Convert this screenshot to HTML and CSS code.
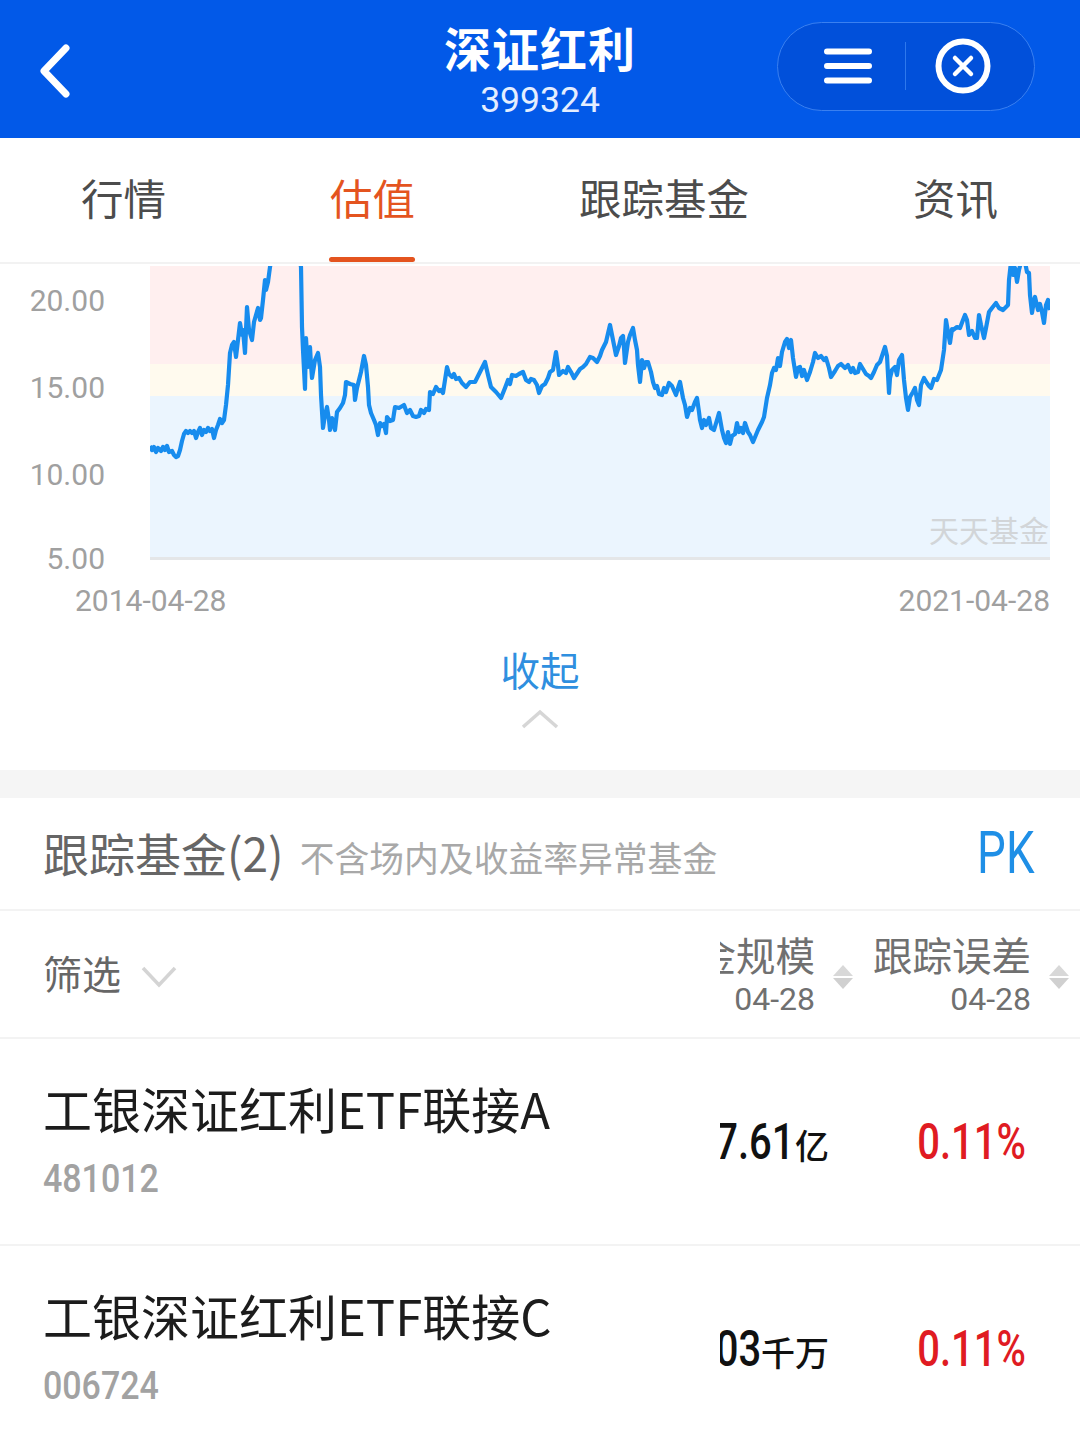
FILE: index.html
```html
<!DOCTYPE html>
<html lang="zh">
<head>
<meta charset="utf-8">
<title>深证红利</title>
<link rel="stylesheet" href="styles.css">
</head>
<body>
<header class="topbar">
  <svg class="back" viewBox="0 0 32 54" width="32" height="54"><path d="M27 4 5 27l22 23" fill="none" stroke="#fff" stroke-width="7" stroke-linecap="round" stroke-linejoin="round"/></svg>
  <div class="title">
    <div class="title-main">深证红利</div>
    <div class="title-code">399324</div>
  </div>
  <div class="capsule">
    <svg class="cap-menu" viewBox="0 0 48 36" width="48" height="36"><path d="M3 3.5h42M3 18h42M3 32.500h42" stroke="#fff" stroke-width="6" stroke-linecap="round"/></svg>
    <span class="cap-sep"></span>
    <svg class="cap-close" viewBox="0 0 56 56" width="56" height="56"><circle cx="28" cy="28" r="24.500" fill="none" stroke="#fff" stroke-width="6"/><path d="M20 20l16 16M36 20 20 36" stroke="#fff" stroke-width="4.500" stroke-linecap="round"/></svg>
  </div>
</header>
<nav class="tabs">
  <span class="tab">行情</span>
  <span class="tab tab-active">估值</span>
  <span class="tab">跟踪基金</span>
  <span class="tab">资讯</span>
</nav>
<section class="chart-card">
  <div class="chart-wrap">
    <div class="y-axis"><span>20.00</span><span>15.00</span><span>10.00</span><span>5.00</span></div>
    <div class="plot">
      <div class="band band-red"></div>
      <div class="band band-yellow"></div>
      <div class="band band-blue"></div>
      <div class="axis-line"></div>
      <svg class="line" viewBox="150 266 900 294" preserveAspectRatio="none"><polyline fill="none" stroke="#178cee" stroke-width="4.200" stroke-linejoin="round" points="150,446 152,450 154,447 156,452 158,448 161,451 163,447 165,450 167,446 169,452 172,451 174,455 176,457 178,456 180,450 182,441 184,434 186,431 188,433 190,431 192,433 194,431 196,438 198,432 200,428 202,435 204,430 206,432 208,428 210,431 212,429 214,438 216,430 218,425 220,419 222,423 224,420 226,405 228,385 230,353 232,345 234,342 236,357 238,340 240,323 242,335 243,330 245,353 247,307 249,330 252,340 254,322 256,315 258,308 260,320 261,318 263,300 265,280 266,290 268,282 270,267 271,262 300,262 301,267 302,327 303,350 305,389 306,338 307,355 308,367 310,347 311,365 312,378 315,360 318,353 320,367 321,395 323,428 325,415 327,407 329,420 330,430 332,418 333,422 335,430 337,412 340,408 343,403 345,395 346,382 350,384 354,385 355,400 357,388 359,380 361,372 364,356 366,365 368,387 369,405 371,413 374,420 376,425 378,435 380,423 382,426 384,424 386,433 387,417 390,421 393,420 395,407 399,408 404,405 407,413 410,410 413,416 416,417 419,416 421,410 424,413 426,409 429,410 430,392 433,394 436,387 439,391 441,390 443,393 445,380 447,367 449,374 452,377 454,374 456,379 459,378 462,383 466,387 470,382 475,382 480,372 485,362 488,375 491,387 496,392 501,398 505,388 508,380 510,384 512,375 516,376 519,374 523,372 526,380 529,382 531,379 534,380 537,385 539,393 542,386 545,384 548,378 550,372 553,370 556,352 558,366 559,375 563,371 566,373 568,367 571,372 574,378 578,372 580,369 583,367 586,364 590,357 593,358 597,362 600,356 602,350 606,342 610,325 613,340 616,355 619,346 621,338 623,336 624,348 625,363 628,342 630,335 633,328 635,340 637,350 638,365 640,382 642,360 644,368 646,362 648,362 651,372 653,382 655,388 657,386 659,394 662,395 664,388 666,392 669,383 672,386 676,395 678,388 680,382 683,398 685,405 687,417 690,408 692,410 695,402 697,398 699,412 700,420 702,428 704,420 706,425 709,418 711,428 714,430 717,420 719,413 722,430 724,438 726,443 728,432 730,444 732,436 735,434 737,423 739,432 741,428 743,433 745,423 748,432 750,435 753,442 758,430 762,422 764,417 767,398 770,385 772,373 774,368 776,370 778,358 780,366 782,352 785,342 787,339 789,348 791,340 793,358 796,377 798,368 800,367 802,376 804,370 807,380 810,372 813,362 815,353 818,358 821,356 824,360 826,358 829,368 831,377 835,371 838,366 841,364 845,368 848,365 851,372 853,368 855,373 858,372 860,364 863,369 866,374 869,376 871,378 874,372 877,365 880,362 883,353 885,347 887,356 889,393 890,378 892,370 895,367 897,375 899,360 902,355 904,380 906,398 908,410 910,397 913,392 915,388 917,400 919,405 921,385 924,378 927,383 929,386 931,388 934,379 937,380 941,370 944,350 946,320 948,332 950,343 952,329 953,330 957,327 960,328 963,320 965,315 967,320 969,335 972,331 975,338 977,338 979,315 981,325 984,338 986,328 989,312 992,308 996,303 999,308 1003,310 1006,307 1008,305 1009,280 1011,262 1013,275 1015,268 1017,282 1019,270 1021,262 1025,262 1027,272 1029,273 1030,295 1032,313 1034,300 1035,297 1038,310 1040,304 1042,312 1044,323 1046,305 1048,300 1050,310"/></svg>
      <div class="watermark">天天基金</div>
    </div>
  </div>
  <div class="x-axis"><span>2014-04-28</span><span>2021-04-28</span></div>
  <div class="collapse">
    <span class="collapse-text">收起</span>
    <svg class="collapse-icon" viewBox="0 0 38 20" width="38" height="20"><path d="M2 18 19 3l17 15" fill="none" stroke="#d6d6d6" stroke-width="3.500"/></svg>
  </div>
</section>
<section class="funds">
  <div class="funds-head">
    <span class="funds-title">跟踪基金(2)</span>
    <span class="funds-note">不含场内及收益率异常基金</span>
    <span class="pk">PK</span>
  </div>
  <div class="filter-row">
    <span class="filter">筛选</span>
    <svg class="filter-icon" viewBox="0 0 36 24" width="36" height="24"><path d="M2 4l16 17L34 4" fill="none" stroke="#d4d4d4" stroke-width="3.500"/></svg>
    <div class="cols">
      <div class="col-head">
        <div class="col-text"><div class="col-name">基金规模</div><div class="col-date">04-28</div></div>
        <span class="sort"><i class="up"></i><i class="down"></i></span>
      </div>
      <div class="col-head">
        <div class="col-text"><div class="col-name">跟踪误差</div><div class="col-date">04-28</div></div>
        <span class="sort"><i class="up"></i><i class="down"></i></span>
      </div>
    </div>
  </div>
  <div class="row">
    <div class="fund"><div class="fund-name">工银深证红利ETF联接A</div><div class="fund-code">481012</div></div>
    <div class="cols vals">
      <div class="val val-a"><b>17.61</b><small>亿</small></div>
      <div class="val val-b">0.11%</div>
    </div>
  </div>
  <div class="row">
    <div class="fund"><div class="fund-name">工银深证红利ETF联接C</div><div class="fund-code">006724</div></div>
    <div class="cols vals">
      <div class="val val-a"><b>303</b><small>千万</small></div>
      <div class="val val-b">0.11%</div>
    </div>
  </div>
</section>
</body>
</html>
```
FILE: styles.css
```css
* { box-sizing: border-box; }
html, body { margin: 0; padding: 0; }
body {
  width: 1080px;
  height: 1433px;
  overflow: hidden;
  background: #fff;
  font-family: "Noto Sans CJK SC", "Noto Sans", sans-serif;
}
.topbar {
  height: 138px;
  background: #0259e8;
  display: flex;
  align-items: center;
  justify-content: space-between;
  padding: 0 45px 0 39px;
  color: #fff;
  position: relative;
}
.back { margin-top: 4px; }
.title {
  position: absolute;
  left: 0;
  right: 0;
  top: 17px;
  text-align: center;
}
.title-main { font-size: 47px; font-weight: 700; line-height: 60px; letter-spacing: 1px; }
.title-code { font-family: Roboto, sans-serif; font-size: 35.5px; line-height: 40px; margin-top: 3px; color: #e4eeff; }
.capsule {
  position: relative;
  width: 258px;
  height: 89px;
  margin-top: -6px;
  border: 1px solid #3a80f0;
  border-radius: 45px;
  background: #0150da;
  display: flex;
  align-items: center;
}
.cap-menu { margin-left: 46px; margin-top: -1px; }
.cap-sep { width: 1px; height: 48px; background: #2e78ec; margin-left: 33px; }
.cap-close { margin-left: 29px; margin-top: -1px; }
.tabs {
  height: 126px;
  border-bottom: 2px solid #f2f2f2;
  display: flex;
  font-size: 42.5px;
  color: #4c4c4c;
  position: relative;
}
.tab { position: absolute; top: 31px; line-height: 56px; }
.tab:nth-child(1) { left: 81px; }
.tab:nth-child(2) { left: 330px; }
.tab:nth-child(3) { left: 579px; }
.tab:nth-child(4) { left: 913px; }
.tab-active { color: #e4541f; }
.tab-active::after {
  content: "";
  position: absolute;
  left: -1px;
  right: 0;
  top: 88px;
  height: 5px;
  border-radius: 3px;
  background: #e4541f;
}
.chart-card { height: 506px; padding-top: 2px; }
.chart-wrap { display: flex; height: 294px; }
.y-axis {
  width: 150px;
  position: relative;
  font-family: Roboto, sans-serif;
  font-size: 30px;
  color: #a0a0a0;
}
.y-axis span { position: absolute; right: 45px; line-height: 34px; }
.y-axis span:nth-child(1) { top: 18px; }
.y-axis span:nth-child(2) { top: 105px; }
.y-axis span:nth-child(3) { top: 192px; }
.y-axis span:nth-child(4) { top: 276px; }
.plot {
  width: 900px;
  height: 294px;
  position: relative;
  display: flex;
  flex-direction: column;
  overflow: hidden;
}
.band-red { height: 98px; background: #ffefef; }
.band-yellow { height: 32px; background: #fffaee; }
.band-blue { height: 161px; background: #ebf5fe; }
.axis-line { height: 3px; background: #e4e6e8; }
.line { position: absolute; inset: 0; width: 900px; height: 294px; }
.watermark {
  position: absolute;
  right: 1px;
  bottom: 11px;
  font-size: 30px;
  line-height: 40px;
  color: #d2d5d8;
}
.x-axis {
  display: flex;
  justify-content: space-between;
  padding: 24px 30px 0 75px;
  font-family: Roboto, sans-serif;
  font-size: 30px;
  line-height: 34px;
  color: #a0a0a0;
}
.collapse { display: flex; flex-direction: column; align-items: center; margin-top: 25px; }
.collapse-text { font-size: 39.5px; line-height: 52px; color: #2f8fdf; }
.collapse-icon { margin-top: 14px; }
.funds { border-top: 28px solid #f5f5f5; }
.funds-head {
  height: 113px;
  padding: 0 46px 0 43px;
  border-bottom: 2px solid #f3f3f3;
  display: flex;
  align-items: center;
}
.funds-title { font-size: 46px; color: #666; line-height: 60px; margin-top: -4px; }
.funds-note { font-size: 34.8px; color: #a8a8a8; margin-left: 16px; line-height: 60px; padding-top: 6px; white-space: nowrap; }
.pk {
  margin-left: auto;
  font-family: Roboto, sans-serif;
  font-size: 60px;
  line-height: 70px;
  color: #1f8fe6;
  transform: scaleX(0.76);
  transform-origin: right center;
  margin-top: -2px;
}
.filter-row {
  height: 128px;
  padding-left: 43px;
  border-bottom: 2px solid #f3f3f3;
  display: flex;
  align-items: center;
  position: relative;
}
.filter { font-size: 39px; color: #666; line-height: 52px; margin-top: -4px; }
.filter-icon { margin-left: 20px; margin-top: 3px; }
.cols {
  position: absolute;
  left: 720px;
  right: 0;
  top: 0;
  bottom: 0;
  overflow: hidden;
  display: flex;
  justify-content: flex-end;
}
.col-head {
  flex: none;
  display: flex;
  align-items: center;
  width: 216px;
  justify-content: flex-end;
}
.col-text { text-align: right; color: #707070; padding-bottom: 3px; }
.col-name { font-size: 39.5px; line-height: 50px; white-space: nowrap; }
.col-date { font-family: Roboto, sans-serif; font-size: 32px; line-height: 36px; margin-top: 2px; }
.sort { display: flex; flex-direction: column; gap: 2px; width: 20px; margin: 6px 11px 0 18px; flex: none; }
.sort i { display: block; width: 0; height: 0; border-left: 10px solid transparent; border-right: 10px solid transparent; }
.sort .up { border-bottom: 11px solid #d8d8d8; }
.sort .down { border-top: 11px solid #d0d0d0; }
.row { height: 207px; border-bottom: 2px solid #f3f3f3; position: relative; padding: 36px 0 0 43px; }
.row:last-child { border-bottom-color: transparent; }
.fund-name { font-size: 49px; line-height: 66px; color: #1c1c1c; white-space: nowrap; }
.fund-code {
  font-family: Roboto, sans-serif;
  font-weight: 500;
  font-size: 39.5px;
  line-height: 48px;
  margin-top: 14px;
  color: #a2a2a2;
  transform: scaleX(0.86);
  transform-origin: left center;
}
.vals { align-items: center; }
.val { flex: none; white-space: nowrap; font-family: Roboto, sans-serif; font-size: 50px; }
.val-a { width: 110px; display: flex; align-items: baseline; justify-content: flex-end; color: #111; padding-right: 1px; }
.val-a b { flex: none; font-weight: 500; transform: scaleX(0.8); transform-origin: right center; }
.val-a small { flex: none; font-family: "Noto Sans CJK SC", sans-serif; font-size: 34px; font-weight: 500; }
.val-b {
  width: 250px;
  padding-right: 54px;
  text-align: right;
  color: #e01b22;
  font-weight: 500;
  transform: scaleX(0.8);
  transform-origin: 196px center;
}
```
